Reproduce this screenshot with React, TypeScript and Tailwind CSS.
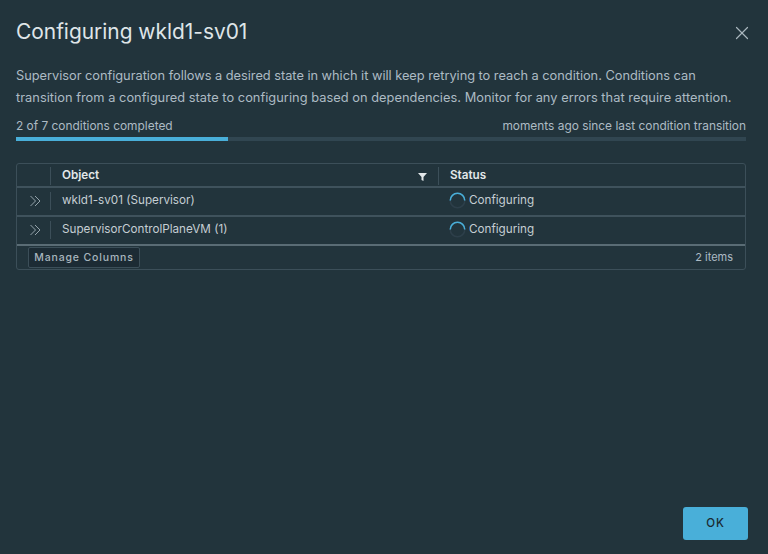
import React from "react";
import { X } from "lucide-react";

const rows = ["wkld1-sv01 (Supervisor)", "SupervisorControlPlaneVM (1)"];

const Spinner = () => (
  <svg width="17" height="17" viewBox="0 0 17 17" fill="none" className="shrink-0">
    <circle cx="8.5" cy="8.5" r="7.25" stroke="#2d3f4a" strokeWidth="1.5" />
    <path d="M1.25 8.5 A7.25 7.25 0 0 1 15.75 8.5" stroke="#49afd9" strokeWidth="1.5" />
  </svg>
);

const Chevrons = () => (
  <svg width="11" height="12" viewBox="0 0 11 12" fill="none" stroke="#94a3ab" strokeWidth="1">
    <path d="M0.5 1 L5.5 6 L0.5 11" />
    <path d="M5 1 L10 6 L5 11" />
  </svg>
);

export default function App() {
  return (
    <div className="h-[554px] w-[768px] bg-[#22343c] flex flex-col pl-4 pr-[22px] overflow-hidden font-['Inter',sans-serif] text-[#c5ced3]">
      <div className="flex items-center justify-between h-[25px] mt-[19px]">
        <h1 className="text-[20.9px] font-normal text-[#dfe5e8]">Configuring wkld1-sv01</h1>
        <X size={22} strokeWidth={1.3} className="mr-[-6.5px] mt-[2px] text-[#a9b6bd]" />
      </div>
      <p className="mt-[21px] text-[12.8px] leading-[22px] text-[#adbbc4] whitespace-nowrap">
        <span className="tracking-[-0.02px]">
          Supervisor configuration follows a desired state in which it will keep retrying to reach a condition. Conditions can
        </span>
        <br />
        <span className="tracking-[0.04px]">
          transition from a configured state to configuring based on dependencies. Monitor for any errors that require attention.
        </span>
      </p>
      <div className="flex justify-between mt-[7px] text-[11.9px] leading-5 text-[#adbbc4]">
        <span>2 of 7 conditions completed</span>
        <span>moments ago since last condition transition</span>
      </div>
      <div className="h-1 mt-[1px] bg-[#314651]">
        <div className="h-full w-[212px] bg-[#49afd9]" />
      </div>
      <div className="mt-[22px] border border-[#3c4f59] rounded-[3px] text-[11.7px]">
        <div className="flex h-[22px] items-center font-semibold text-[#e3e8ea]">
          <div className="w-[34px] h-[18px] mt-[2px] border-r border-[#3c4f59]" />
          <div className="flex-1 flex items-center justify-between pl-[11px] h-[18px] mt-[2px] border-r border-[#3c4f59]">
            <span>Object</span>
            <svg width="9" height="8" viewBox="0 0 9 8" className="mr-[11px] mt-px">
              <path d="M0 0 H9 L5.5 4 V8 L3.5 7 V4 Z" fill="#e3e8ea" />
            </svg>
          </div>
          <div className="w-[306px] pl-[11px] mt-[2px]">Status</div>
        </div>
        {rows.map((name) => (
          <div key={name} className="flex h-[29px] pb-[2px] items-center border-t-2 border-[#3f525c]">
            <div className="w-[34px] h-[18px] border-r border-[#3c4f59] flex items-center justify-center pl-[3px]">
              <Chevrons />
            </div>
            <div className="flex-1 pl-[11px] text-[#c5ced3]">{name}</div>
            <div className="w-[306px] pl-[10px] flex items-center gap-[3px]">
              <Spinner />
              <span>Configuring</span>
            </div>
          </div>
        ))}
        <div className="flex h-[25px] items-center justify-between border-t-2 border-[#5a6c75] pl-[11px] pr-3">
          <button className="h-[21px] w-[112px] border border-[#3c4f59] rounded-[2px] bg-[#1c2b34] text-[10.5px] font-medium tracking-[0.85px] text-[#a8b6be]">
            Manage Columns
          </button>
          <span className="text-[11px] text-[#adbbc4]">2 items</span>
        </div>
      </div>
      <div className="mt-auto mb-[14px] flex justify-end mr-[-2px]">
        <button className="w-[65px] h-[33px] rounded-[3px] bg-[#49afd9] text-[#1b2a32] text-[11.5px] font-medium tracking-[1px]">
          OK
        </button>
      </div>
    </div>
  );
}
